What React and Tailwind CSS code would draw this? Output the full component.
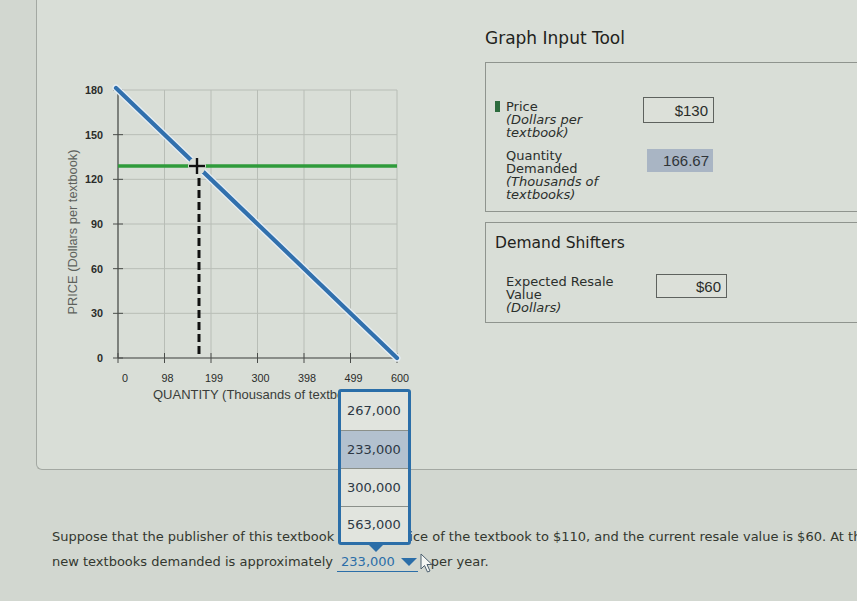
import React from 'react';

const X0 = 118;
const X1 = 397;
const Y0 = 358;
const Y1 = 90;

const xTicks = [0, 98, 199, 300, 398, 499, 600];
const yTicks = [0, 30, 60, 90, 120, 150, 180];

const tx = (i) => X0 + (i * (X1 - X0)) / 6;
const ty = (i) => Y0 - (i * (Y0 - Y1)) / 6;

const DemandGraph = () => {
    return (
        <svg width="448" height="469" viewBox="37 0 448 469" className="block">
            {/* grid */}
            {xTicks.map((v, i) => (
                <line key={'gx' + v} x1={tx(i)} y1={Y1} x2={tx(i)} y2={Y0} stroke="#b8bdb6" strokeWidth="1" />
            ))}
            {yTicks.map((v, i) => (
                <line key={'gy' + v} x1={X0} y1={ty(i)} x2={X1} y2={ty(i)} stroke="#b8bdb6" strokeWidth="1" />
            ))}

            {/* axes */}
            <line x1={X0} y1={Y1 - 2} x2={X0} y2={Y0} stroke="#4a4d4a" strokeWidth="1.2" />
            <line x1={X0} y1={Y0} x2={X1 + 1} y2={Y0} stroke="#4a4d4a" strokeWidth="1.2" />
            {yTicks.map((v, i) => (
                <line key={'ty' + v} x1={X0 - 5} y1={ty(i)} x2={X0 + 5} y2={ty(i)} stroke="#4a4d4a" strokeWidth="1" />
            ))}
            {xTicks.map((v, i) => (
                <line key={'tx' + v} x1={tx(i)} y1={Y0 - 5} x2={tx(i)} y2={Y0 + 5} stroke="#4a4d4a" strokeWidth="1" />
            ))}

            {/* tick labels */}
            {yTicks.map((v, i) => (
                <text key={'ly' + v} x="103" y={ty(i) + 4} textAnchor="end" fontFamily="'Liberation Sans', Arial, sans-serif" fontSize="10.8" fontWeight="bold" fill="#2a2c2a">
                    {v}
                </text>
            ))}
            {xTicks.map((v, i) => (
                <text key={'lx' + v} x={tx(i) + (i === 0 ? 7 : 3)} y="382" textAnchor="middle" fontFamily="'Liberation Sans', Arial, sans-serif" fontSize="10.8" fill="#2a2c2a">
                    {v}
                </text>
            ))}

            {/* axis titles */}
            <text x="153" y="399" fontFamily="'Liberation Sans', Arial, sans-serif" fontSize="13" fill="#3a3d3a">
                QUANTITY (Thousands of textbooks)
            </text>
            <text transform="translate(77 232) rotate(-90)" textAnchor="middle" fontFamily="'Liberation Sans', Arial, sans-serif" fontSize="12.8" fill="#5d615c">
                PRICE (Dollars per textbook)
            </text>

            {/* demand curve */}
            <line x1="116" y1="88" x2={X1} y2={Y0} stroke="#e6eef4" strokeWidth="7" strokeLinecap="round" />
            <line x1="116" y1="88" x2={X1} y2={Y0} stroke="#3170ad" strokeWidth="4.2" strokeLinecap="round" />

            {/* price line */}
            <line x1={X0} y1="166" x2={X1} y2="166" stroke="#2f9b3b" strokeWidth="3.5" />

            {/* dashed drop line */}
            <line x1="199" y1="178" x2="199" y2={Y0} stroke="#111" strokeWidth="3" strokeDasharray="8 4" />

            {/* crosshair */}
            <circle cx="197" cy="166" r="9" fill="#d9ded7" />
            <g stroke="#111" strokeWidth="2.4">
                <line x1="189" y1="166" x2="205" y2="166" />
                <line x1="197" y1="158" x2="197" y2="174" />
            </g>
        </svg>
    );
};

const DropdownList = () => {
    const items = ['267,000', '233,000', '300,000', '563,000'];
    return (
        <div className="absolute left-[338px] top-[389px] w-[73px] border-[3px] border-[#2b6ea8] rounded-[3px] bg-[#e1e4de]">
            {items.map((item, i) => (
                <div
                    key={item}
                    className={
                        (i === 1 ? 'bg-[#b3c1cf] ' : '') +
                        (i > 0 ? 'border-t border-[#8b908a] ' : '') +
                        (i === 3 ? 'h-[36px] ' : 'h-[38px] ') +
                        'flex items-center pl-[6px] text-[13px] text-[#2d3844]'
                    }
                >
                    {item}
                </div>
            ))}
            <svg className="absolute left-[27px] -bottom-[10px]" width="16" height="8" viewBox="0 0 16 8">
                <path d="M0 0 L16 0 L8 8 Z" fill="#2b6ea8" />
            </svg>
        </div>
    );
};

const Cursor = () => (
    <svg className="absolute left-[420px] top-[553px]" width="14" height="21" viewBox="0 0 14 21">
        <path d="M1 1 L1 16 L4.5 12.5 L7.5 19 L10 18 L7 11.5 L12 11.5 Z" fill="#f4f6f3" stroke="#4d6070" strokeWidth="1" strokeLinejoin="round" />
    </svg>
);

export default function App() {
    return (
        <div className="relative w-[857px] h-[601px] overflow-hidden bg-[#d2d7d0] font-['DejaVu_Sans',sans-serif] text-[#2b2f2c]">
            <div className="ml-[36px] h-[470px] flex border-l border-b border-[#a3a8a2] rounded-bl-[6px] bg-[#d9ded7]">
                <div className="w-[448px] shrink-0">
                    <DemandGraph />
                </div>

                <div className="shrink-0 w-[500px] pt-[28px]">
                    <h2 className="text-[17px] leading-[20px] text-[#1f2320]">Graph Input Tool</h2>

                    <div className="mt-[14px] h-[150px] border border-[#8f948e] pt-[37px] text-[13px] leading-[13px]">
                        <div className="flex items-start pl-[9px]">
                            <div className="w-[5px] h-[11px] mt-[1px] bg-[#2c6b3d]" />
                            <div className="ml-[6px] w-[137px]">
                                <div>Price</div>
                                <div className="italic">(Dollars per</div>
                                <div className="italic">textbook)</div>
                            </div>
                            <div className="-mt-[3px] w-[71px] h-[26px] border border-[#5e625e] bg-[#dce0d9] flex items-center justify-end pr-[5px] font-['Liberation_Sans',Arial,sans-serif] text-[15px] text-[#2a2d2a]">
                                $130
                            </div>
                        </div>

                        <div className="flex items-start pl-[20px] mt-[10px]">
                            <div className="w-[141px]">
                                <div>Quantity</div>
                                <div>Demanded</div>
                                <div className="italic">(Thousands of</div>
                                <div className="italic">textbooks)</div>
                            </div>
                            <div className="w-[66px] h-[23px] bg-[#a9b5c4] flex items-center justify-end pr-[4px] font-['Liberation_Sans',Arial,sans-serif] text-[15px] text-[#2f3438]">
                                166.67
                            </div>
                        </div>
                    </div>

                    <div className="mt-[10px] h-[101px] border border-[#8f948e] pt-[10px] pl-[9px]">
                        <h3 className="text-[15.5px] leading-[20px] text-[#1f2320]">Demand Shifters</h3>
                        <div className="flex items-start ml-[11px] mt-[22px] text-[13px] leading-[13px]">
                            <div className="w-[150px]">
                                <div>Expected Resale</div>
                                <div>Value</div>
                                <div className="italic">(Dollars)</div>
                            </div>
                            <div className="-mt-[1px] w-[71px] h-[24px] border border-[#5e625e] bg-[#dce0d9] flex items-center justify-end pr-[5px] font-['Liberation_Sans',Arial,sans-serif] text-[15px] text-[#2a2d2a]">
                                $60
                            </div>
                        </div>
                    </div>
                </div>
            </div>

            <div className="mt-[54px] pl-[52px] text-[13px] leading-[25px] text-[#33372f] whitespace-nowrap">
                <div>
                    Suppose that the publisher of this textbook{' '}
                    <span className="inline-block w-[71px] overflow-hidden align-bottom">sets the pr</span>
                    ice of the textbook to $110, and the current resale value is $60. At this price, the number of
                </div>
                <div className="flex items-baseline">
                    <span>new textbooks demanded is approximately&nbsp;</span>
                    <span className="inline-flex items-center border-b-[1.5px] border-[#2b6ea8] pl-[4px] pr-[1px] leading-[18px] text-[#2b6ea8]">
                        233,000
                        <svg className="ml-[6px]" width="16" height="8" viewBox="0 0 16 8">
                            <path d="M0 0 L16 0 L8 8 Z" fill="#2b6ea8" />
                        </svg>
                    </span>
                    <span className="ml-[13px]">per year.</span>
                </div>
            </div>

            <DropdownList />
            <Cursor />
        </div>
    );
}
